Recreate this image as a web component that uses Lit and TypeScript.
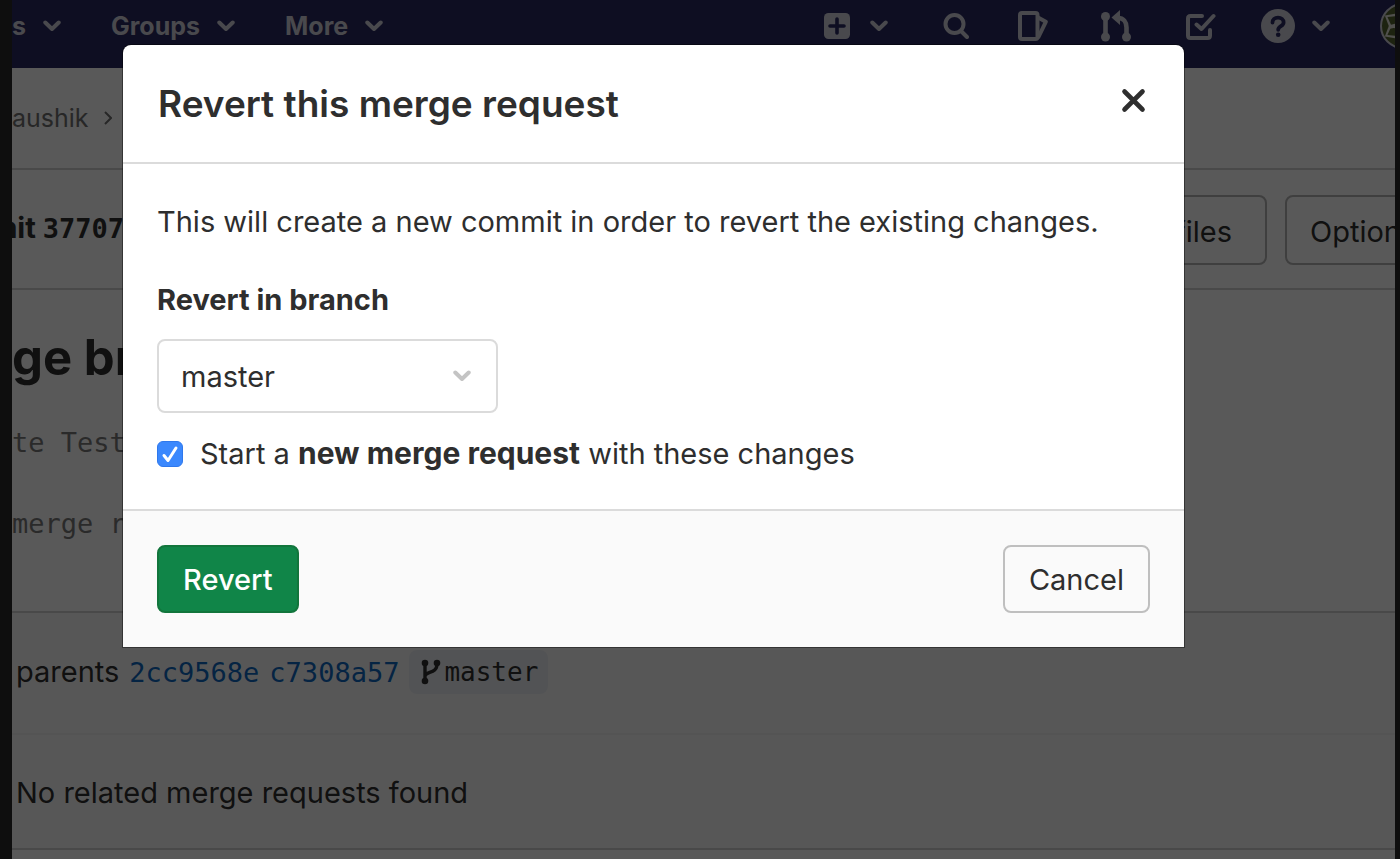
import { LitElement, html, css, svg } from "lit";
import { customElement, property } from "lit/decorators.js";

const chevron = html`<svg class="chev" width="18" height="12" viewBox="0 0 18 12" aria-hidden="true">
  <path d="M2.3 2.5 9 9l6.700-6.500" fill="none" stroke="currentColor" stroke-width="4" stroke-linecap="round" stroke-linejoin="round"/>
</svg>`;

const leaves = [0, 60, 120, 180, 240, 300].map(
  (a) => svg`<g transform=${`rotate(${a} 23 23)`}>
    <path d="m23 23-9-10 9-11 9 11z" fill="#e4e4dc"/>
    <path d="m23 17-5-5 5-7 5 7z" fill="#55642f"/>
  </g>`,
);

@customElement("nav-bar")
class NavBar extends LitElement {
  static styles = css`
    :host { display: block; }
    .bar {
      display: flex;
      justify-content: space-between;
      align-items: center;
      height: 68px;
      box-sizing: border-box;
      padding-bottom: 16px;
      background: #292961;
      color: #d1d1dc;
      overflow: hidden;
    }
    a { color: inherit; text-decoration: none; }
    svg { display: block; flex: none; }
    .menus { display: flex; gap: 50px; }
    .menu {
      display: flex;
      align-items: center;
      gap: 17px;
      font-size: 25px;
      line-height: 32px;
      font-weight: 700;
    }
    .tools {
      display: grid;
      grid-template-columns: 119px 75px 83px 85px 75px 119px 46px;
      align-items: center;
      margin-right: -31px;
    }
    .pair { display: flex; align-items: center; gap: 20px; }
    .tight { gap: 17px; }
  `;

  render() {
    return html`
      <nav class="bar" aria-label="Main">
        <div class="menus">
          <a class="menu" href="#">s ${chevron}</a>
          <a class="menu" href="#">Groups ${chevron}</a>
          <a class="menu" href="#">More ${chevron}</a>
        </div>
        <div class="tools">
          <a class="pair" href="#" aria-label="New">
            <svg width="26" height="26" viewBox="0 0 26 26">
              <rect width="26" height="26" rx="4.500" fill="currentColor"/>
              <path d="M13 6v14M6 13h14" stroke="#292961" stroke-width="3.600" stroke-linecap="round"/>
            </svg>
            ${chevron}
          </a>
          <a href="#" aria-label="Search">
            <svg width="26" height="26" viewBox="0 0 26 26" fill="none" stroke="currentColor" stroke-width="4" stroke-linecap="round">
              <circle cx="11.500" cy="11" r="9"/><path d="m18 18 6 6"/>
            </svg>
          </a>
          <a href="#" aria-label="Issues">
            <svg width="30" height="30" viewBox="0 0 30 30" fill="none" stroke="currentColor" stroke-width="4" stroke-linejoin="round">
              <rect x="2" y="2" width="17.500" height="26" rx="2"/>
              <path d="m20 6.500 7.800 4.300L20 27" stroke-width="4"/>
            </svg>
          </a>
          <a href="#" aria-label="Merge requests">
            <svg width="30" height="32" viewBox="0 0 30 32">
              <path d="M4.500 6v21M17 8c5.500 0 8.500 4 8.500 9.500V27" fill="none" stroke="currentColor" stroke-width="4.600"/>
              <g fill="currentColor"><circle cx="4.500" cy="6.500" r="4.500"/><circle cx="4.500" cy="27" r="4.500"/><circle cx="25.500" cy="27" r="4.500"/><path d="M19 0v15L10.500 7.500z"/></g>
            </svg>
          </a>
          <a href="#" aria-label="To-do list">
            <svg width="30" height="28" viewBox="0 0 30 28" fill="none" stroke="currentColor" stroke-width="4" stroke-linecap="round" stroke-linejoin="round">
              <path d="M16 4H4.500Q2 4 2 6.500v17Q2 26 4.500 26h17q2.500 0 2.500-2.500V18"/><path d="m10.500 12.500 5 4.500L27.500 4"/>
            </svg>
          </a>
          <a class="pair tight" href="#" aria-label="Help">
            <svg width="34" height="34" viewBox="0 0 34 34">
              <circle cx="17" cy="17" r="17" fill="currentColor"/>
              <path d="M11.500 13.500c0-3 2.300-4.800 5.500-4.800s5.600 1.900 5.600 4.700c0 3.900-5.400 3.600-5.400 7.400" fill="none" stroke="#292961" stroke-width="3.800" stroke-linecap="round"/>
              <circle cx="17.200" cy="25.700" r="2.300" fill="#292961"/>
            </svg>
            ${chevron}
          </a>
          <a href="#" aria-label="Profile">
            <svg width="46" height="46" viewBox="0 0 46 46">
              <circle cx="23" cy="23" r="22" fill="#55642f" stroke="#d1d1dc" stroke-width="2"/>
              ${leaves}
            </svg>
          </a>
        </div>
      </nav>
    `;
  }
}

@customElement("commit-page")
class CommitPage extends LitElement {
  static styles = css`
    :host { display: block; color: #303030; }
    .crumbs, .head, .row {
      display: flex;
      align-items: center;
      box-sizing: border-box;
      border-bottom: 2px solid #d0d0d0;
    }
    .crumbs { height: 102px; gap: 15px; font-size: 25px; color: #707070; }
    .crumbs a { color: inherit; text-decoration: none; }
    .head { height: 120px; justify-content: space-between; font-size: 29px; padding-top: 2px; }
    .sha {
      display: flex;
      justify-content: flex-end;
      align-items: baseline;
      width: 112px;
      overflow: hidden;
      white-space: pre;
      font-weight: 700;
      line-height: 36px;
      padding-bottom: 4px;
    }
    code, .mono { font-family: "DejaVu Sans Mono", "Liberation Mono", monospace; font-size: 27px; }
    .actions { display: flex; gap: 18px; margin-right: -48px; }
    .btn {
      height: 70px;
      box-sizing: border-box;
      padding: 2px 33px 0;
      border: 2px solid #b4b4b4;
      border-radius: 8px;
      background: none;
      color: inherit;
      font: inherit;
    }
    .more { width: 158px; padding: 2px 23px 0; text-align: left; }
    .message { height: 323px; box-sizing: border-box; overflow: hidden; border-bottom: 2px solid #d0d0d0; padding-top: 38px; }
    h1 { margin: 0; font-size: 49px; line-height: 60px; font-weight: 700; }
    .message p { margin: 0; line-height: 41px; color: #7a7a7a; white-space: nowrap; }
    .body { padding-top: 34px; display: grid; gap: 40px; }
    .row { background: #fafafa; padding: 0 4px; font-size: 29px; white-space: nowrap; }
    .parents { height: 122px; gap: 10px; padding-bottom: 3px; border-color: #f0f0f0; }
    .parents a { color: #1068bf; text-decoration: none; }
    .badge {
      display: flex;
      align-items: center;
      gap: 3px;
      height: 44px;
      padding: 0 10px 0 12px;
      border-radius: 8px;
      background: #ebeef2;
    }
    .badge code { font-size: 26px; }
    .related { height: 115px; padding-top: 2px; }
    .related p { margin: 0; }
  `;

  render() {
    return html`
      <div class="crumbs">
        <a href="#">aushik</a>
        <svg width="8" height="14" viewBox="0 0 8 14" aria-hidden="true"><path d="m1 1 6 6-6 6" fill="none" stroke="currentColor" stroke-width="2"/></svg>
      </div>
      <div class="head">
        <div class="sha"><span>mit </span><code>37707</code></div>
        <div class="actions">
          <button class="btn">Browse files</button>
          <button class="btn more">Options</button>
        </div>
      </div>
      <div class="message">
        <h1>ge br</h1>
        <div class="body mono"><p>te Test</p><p>merge r</p></div>
      </div>
      <div class="row parents">
        <span>parents</span>
        <a href="#"><code>2cc9568e</code></a>
        <a href="#"><code>c7308a57</code></a>
        <span class="badge">
          <svg width="20" height="26" viewBox="0 0 20 26" aria-hidden="true">
            <path d="M4 4v18M4 17c1-5 12-2 12-12" fill="none" stroke="currentColor" stroke-width="3.400"/>
            <g fill="currentColor"><circle cx="4" cy="4" r="3.300"/><circle cx="4" cy="22" r="3.300"/><circle cx="16" cy="4" r="3.300"/></g>
          </svg>
          <code>master</code>
        </span>
      </div>
      <div class="row related"><p>No related merge requests found</p></div>
    `;
  }
}

@customElement("revert-dialog")
class RevertDialog extends LitElement {
  @property() branch = "master";

  static styles = css`
    :host { display: block; }
    .dialog {
      border-radius: 8px 8px 0 0;
      background: #fff;
      color: #2e2e2e;
      font-size: 29px;
      line-height: 40px;
      box-shadow: 0 0 0 1px rgba(0, 0, 0, 0.4);
    }
    .header {
      display: flex;
      justify-content: space-between;
      align-items: center;
      padding: 34px 34px 34px 35px;
      border-bottom: 2px solid #dbdbdb;
    }
    h2 { margin: 0; font-size: 37px; line-height: 49px; font-weight: 600; }
    .close { display: flex; padding: 0 4px 6px; border: 0; background: none; color: inherit; }
    .content { padding: 38px 34px 35px; }
    p { margin: 0 0 38px; }
    .name { display: block; margin-bottom: 19px; font-weight: 700; }
    .picker { display: grid; width: 341px; align-items: center; margin-bottom: 21px; }
    select {
      grid-area: 1 / 1;
      appearance: none;
      height: 74px;
      padding: 2px 22px 0;
      border: 2px solid #dbdbdb;
      border-radius: 8px;
      background: #fff;
      color: inherit;
      font: inherit;
    }
    .chev { grid-area: 1 / 1; justify-self: end; margin-right: 27px; color: #c4c4c4; pointer-events: none; }
    .check { display: flex; align-items: center; gap: 17px; }
    .tick { display: grid; }
    .tick input {
      grid-area: 1 / 1;
      appearance: none;
      width: 26px;
      height: 26px;
      margin: 0;
      border: 1px solid #2f78ec;
      border-radius: 6px;
      background: #3b88fd;
    }
    .tick svg { grid-area: 1 / 1; pointer-events: none; }
    b { font-size: 30px; font-weight: 700; line-height: 30px; }
    .footer {
      display: flex;
      justify-content: space-between;
      padding: 34px;
      border-top: 2px solid #dbdbdb;
      background: #fafafa;
    }
    .btn {
      height: 68px;
      padding: 2px 24px 0;
      border: 2px solid #bfbfbf;
      border-radius: 8px;
      background: #fafafa;
      color: inherit;
      font: inherit;
    }
    .ok { border-color: #12753c; background: #108548; color: #fff; font-weight: 500; }
  `;

  render() {
    return html`
      <div class="dialog" role="dialog" aria-labelledby="title">
        <div class="header">
          <h2 id="title">Revert this merge request</h2>
          <button class="close" aria-label="Close">
            <svg width="25" height="25" viewBox="0 0 25 25"><path d="m3.500 3.500 18 18M21.500 3.500l-18 18" stroke="currentColor" stroke-width="4.600" stroke-linecap="round"/></svg>
          </button>
        </div>
        <div class="content">
          <p>This will create a new commit in order to revert the existing changes.</p>
          <label class="name" for="branch">Revert in branch</label>
          <div class="picker">
            <select id="branch"><option>${this.branch}</option></select>
            ${chevron}
          </div>
          <label class="check">
            <span class="tick">
              <input type="checkbox" checked>
              <svg width="26" height="26" viewBox="0 0 26 26" aria-hidden="true"><path d="m7 14.500 4 5L19 7" fill="none" stroke="#fff" stroke-width="3" stroke-linecap="round" stroke-linejoin="round"/></svg>
            </span>
            <span>Start a <b>new merge request</b> with these changes</span>
          </label>
        </div>
        <div class="footer">
          <button class="btn ok">Revert</button>
          <button class="btn">Cancel</button>
        </div>
      </div>
    `;
  }
}

@customElement("app-root")
class AppRoot extends LitElement {
  static styles = css`
    :host {
      display: block;
      height: 100vh;
      box-sizing: border-box;
      padding: 0 5px 0 12px;
      background: #0e0e0e;
      font-family: Inter, "Liberation Sans", sans-serif;
    }
    .view { position: relative; height: 100%; overflow: hidden; background: #fff; }
    .backdrop { position: absolute; inset: 0; padding: 45px 211px 0 111px; background: rgba(0, 0, 0, 0.65); }
  `;

  render() {
    return html`
      <div class="view">
        <nav-bar></nav-bar>
        <commit-page></commit-page>
        <div class="backdrop"><revert-dialog></revert-dialog></div>
      </div>
    `;
  }
}
